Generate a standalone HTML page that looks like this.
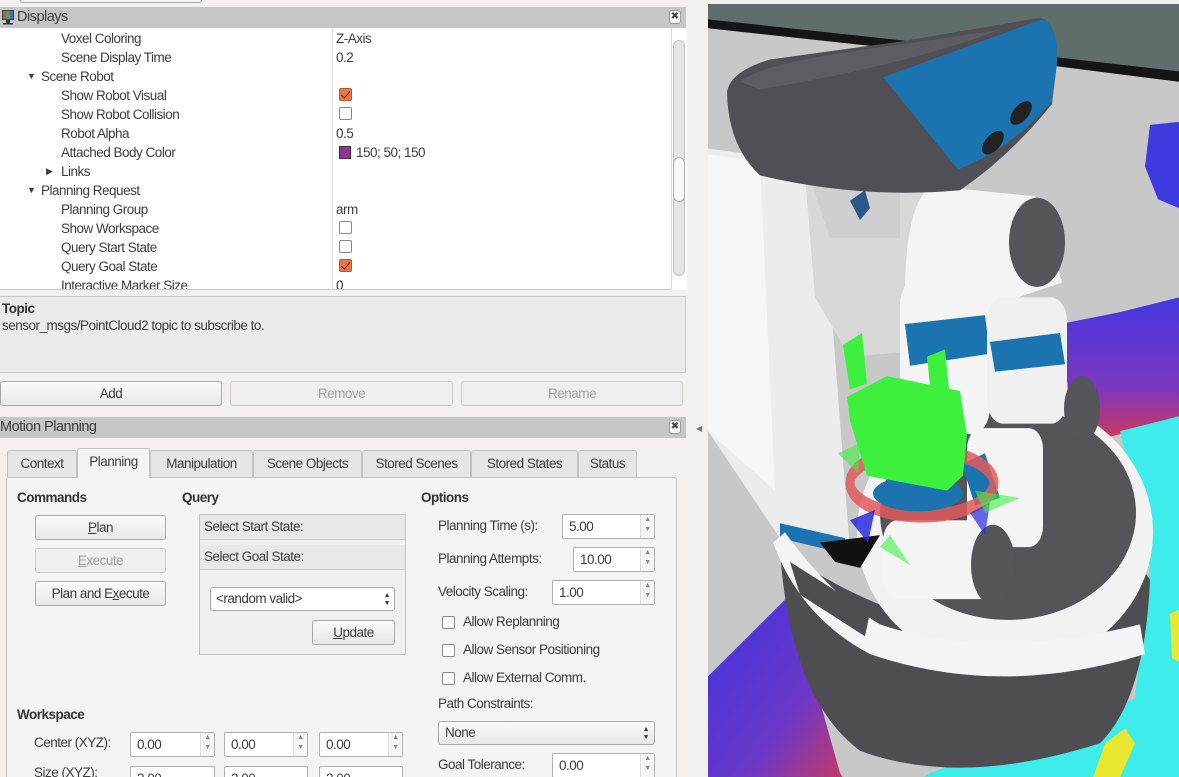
<!DOCTYPE html>
<html><head><meta charset="utf-8"><style>
*{box-sizing:border-box;margin:0;padding:0}
html,body{width:1179px;height:777px;overflow:hidden}
body{background:#f2f1f0;font-family:"Liberation Sans Narrow","Liberation Sans",sans-serif;font-size:13.5px;letter-spacing:-0.5px;color:#3c3c3c;position:relative}
.a{position:absolute;white-space:nowrap}
.hdr{position:absolute;background:#c6c6c6;height:21px}
.close{position:absolute;width:12px;height:14px;border:1px solid #999;border-radius:3px;background:#f4f4f4;font-size:10px;line-height:12px;text-align:center;color:#444;letter-spacing:0}
.row{position:absolute;left:0;height:19px;line-height:19px}
.cb{position:absolute;width:13px;height:13px;border:1px solid #888;border-radius:2px;background:#fff}
.cb.on{background:#e9764a;border-color:#b55a36}
.cb.on:after{content:"";position:absolute;left:3px;top:0px;width:4px;height:8px;border:solid #6a2a10;border-width:0 1.5px 1.5px 0;transform:rotate(40deg)}
.btn{position:absolute;border:1px solid #a8a8a8;border-radius:3px;background:linear-gradient(#fafafa,#e8e8e8);text-align:center;color:#3c3c3c}
.btn.dis{color:#a0a0a0;border-color:#ccc;background:#efefef}
.inp{position:absolute;border:1px solid #b0b0b0;border-radius:2px;background:#fff;padding-left:6px;line-height:23px}
.spin{position:absolute;right:0;top:0;bottom:0;width:14px;border-left:1px solid #ddd;font-size:7px;line-height:10px;text-align:center;color:#888;background:#f6f6f6}
.tab{position:absolute;top:450px;height:27px;line-height:26px;border:1px solid #c2c2c2;border-bottom:none;background:#e6e6e6;text-align:center;border-radius:3px 3px 0 0}
b{font-weight:bold;color:#333}
</style></head><body>
<div class="a" style="left:20px;top:-6px;width:182px;height:9px;border:1px solid #aaa;border-radius:3px;background:#f6f6f6"></div>
<div class="hdr" style="left:0;top:7px;width:686px"></div>
<svg class="a" style="left:1px;top:9px" width="14" height="16"><rect x="1" y="1" width="12" height="10" fill="#444"/><rect x="2" y="2" width="3" height="8" fill="#d44"/><rect x="5" y="2" width="4" height="8" fill="#4a4"/><rect x="9" y="2" width="3" height="8" fill="#46c"/><rect x="5" y="11" width="4" height="3" fill="#333"/><rect x="2" y="14" width="10" height="1.5" fill="#333"/></svg>
<div class="a" style="left:17px;top:8px;line-height:19px;font-size:14.5px">Displays</div>
<div class="close" style="left:669px;top:10px">✖</div>
<div class="a" style="left:0;top:28px;width:671px;height:262px;background:#fff;border-bottom:1px solid #c8c8c8;overflow:hidden">
<div class="a" style="left:332px;top:0;width:1px;height:262px;background:#ddd"></div>
<div class="row" style="top:1px;left:61px">Voxel Coloring</div><div class="row" style="top:1px;left:336px">Z-Axis</div>
<div class="row" style="top:20px;left:61px">Scene Display Time</div><div class="row" style="top:20px;left:336px">0.2</div>
<div class="row" style="top:39px;left:27px;font-size:9px">▼</div><div class="row" style="top:39px;left:41px">Scene Robot</div>
<div class="row" style="top:58px;left:61px">Show Robot Visual</div><div class="cb on" style="left:339px;top:60px"></div>
<div class="row" style="top:77px;left:61px">Show Robot Collision</div><div class="cb" style="left:339px;top:79px"></div>
<div class="row" style="top:96px;left:61px">Robot Alpha</div><div class="row" style="top:96px;left:336px">0.5</div>
<div class="row" style="top:115px;left:61px">Attached Body Color</div><div class="a" style="left:339px;top:118px;width:12px;height:13px;background:#963296;border:1px solid #333"></div><div class="row" style="top:115px;left:356px">150; 50; 150</div>
<div class="row" style="top:134px;left:46px;font-size:9px">▶</div><div class="row" style="top:134px;left:61px">Links</div>
<div class="row" style="top:153px;left:27px;font-size:9px">▼</div><div class="row" style="top:153px;left:41px">Planning Request</div>
<div class="row" style="top:172px;left:61px">Planning Group</div><div class="row" style="top:172px;left:336px">arm</div>
<div class="row" style="top:191px;left:61px">Show Workspace</div><div class="cb" style="left:339px;top:193px"></div>
<div class="row" style="top:210px;left:61px">Query Start State</div><div class="cb" style="left:339px;top:212px"></div>
<div class="row" style="top:229px;left:61px">Query Goal State</div><div class="cb on" style="left:339px;top:231px"></div>
<div class="row" style="top:248px;left:61px">Interactive Marker Size</div><div class="row" style="top:248px;left:336px">0</div>
</div>
<div class="a" style="left:671px;top:28px;width:16px;height:262px;background:#fff;border-left:1px solid #ddd"></div>
<div class="a" style="left:673px;top:40px;width:12px;height:236px;border:1px solid #c0c0c0;border-radius:6px;background:#e4e4e4"></div>
<div class="a" style="left:673px;top:157px;width:12px;height:45px;border:1px solid #b0b0b0;border-radius:6px;background:#f8f8f8"></div>
<div class="a" style="left:0;top:296px;width:686px;height:77px;background:#edebe7;border:1px solid #c8c8c8;border-left:none"></div>
<div class="a" style="left:2px;top:301px;font-weight:bold;color:#333">Topic</div>
<div class="a" style="left:2px;top:318px">sensor_msgs/PointCloud2 topic to subscribe to.</div>
<div class="btn" style="left:0;top:381px;width:222px;height:25px;line-height:23px">Add</div>
<div class="btn dis" style="left:230px;top:381px;width:223px;height:25px;line-height:23px">Remove</div>
<div class="btn dis" style="left:461px;top:381px;width:222px;height:25px;line-height:23px">Rename</div>
<div class="hdr" style="left:0;top:417px;width:686px"></div>
<div class="a" style="left:0;top:418px;line-height:19px;font-size:14.5px">Motion Planning</div>
<div class="close" style="left:669px;top:420px">✖</div>
<div class="a" style="left:696px;top:424px;font-size:8px;color:#777">◀</div>
<div class="a" style="left:6px;top:477px;width:671px;height:310px;border:1px solid #c2c2c2;background:#f4f4f4;border-radius:3px"></div>
<div class="tab" style="left:7px;width:70px">Context</div>
<div class="tab" style="left:77px;width:73px;top:448px;height:30px;background:#f4f4f4">Planning</div>
<div class="tab" style="left:150px;width:103px">Manipulation</div>
<div class="tab" style="left:253px;width:109px">Scene Objects</div>
<div class="tab" style="left:362px;width:109px">Stored Scenes</div>
<div class="tab" style="left:471px;width:107px">Stored States</div>
<div class="tab" style="left:578px;width:59px">Status</div>
<div class="a" style="left:17px;top:490px"><b>Commands</b></div>
<div class="btn" style="left:35px;top:515px;width:131px;height:25px;line-height:23px"><u>P</u>lan</div>
<div class="btn dis" style="left:35px;top:548px;width:131px;height:25px;line-height:23px"><u>E</u>xecute</div>
<div class="btn" style="left:35px;top:581px;width:131px;height:25px;line-height:23px">Plan and E<u>x</u>ecute</div>
<div class="a" style="left:182px;top:490px"><b>Query</b></div>
<div class="a" style="left:199px;top:514px;width:207px;height:141px;border:1px solid #c2c2c2;background:#f0f0f0"></div>
<div class="a" style="left:200px;top:515px;width:205px;height:25px;background:#e8e8e8;border-bottom:1px solid #ccc;padding-left:4px;line-height:24px">Select Start State:</div>
<div class="a" style="left:200px;top:545px;width:205px;height:25px;background:#e8e8e8;border-bottom:1px solid #ccc;padding-left:4px;line-height:24px">Select Goal State:</div>
<div class="btn" style="left:210px;top:587px;width:185px;height:24px;line-height:22px;text-align:left;padding-left:5px;background:#fff">&lt;random valid&gt;<span style="position:absolute;right:4px;top:0;font-size:7px;line-height:8px;padding-top:4px">▲<br>▼</span></div>
<div class="btn" style="left:312px;top:620px;width:83px;height:25px;line-height:23px"><u>U</u>pdate</div>
<div class="a" style="left:421px;top:490px"><b>Options</b></div>
<div class="a" style="left:438px;top:518px">Planning Time (s):</div>
<div class="inp" style="left:562px;top:514px;width:93px;height:25px">5.00<div class="spin">▲<br>▼</div></div>
<div class="a" style="left:438px;top:551px">Planning Attempts:</div>
<div class="inp" style="left:573px;top:547px;width:82px;height:25px">10.00<div class="spin">▲<br>▼</div></div>
<div class="a" style="left:438px;top:584px">Velocity Scaling:</div>
<div class="inp" style="left:552px;top:580px;width:103px;height:25px">1.00<div class="spin">▲<br>▼</div></div>
<div class="cb" style="left:442px;top:616px"></div><div class="a" style="left:463px;top:614px">Allow Replanning</div>
<div class="cb" style="left:442px;top:644px"></div><div class="a" style="left:463px;top:642px">Allow Sensor Positioning</div>
<div class="cb" style="left:442px;top:672px"></div><div class="a" style="left:463px;top:670px">Allow External Comm.</div>
<div class="a" style="left:438px;top:696px">Path Constraints:</div>
<div class="btn" style="left:438px;top:721px;width:217px;height:24px;line-height:22px;text-align:left;padding-left:6px">None<span style="position:absolute;right:5px;top:0;font-size:7px;line-height:8px;padding-top:4px">▲<br>▼</span></div>
<div class="a" style="left:438px;top:757px">Goal Tolerance:</div>
<div class="inp" style="left:552px;top:753px;width:103px;height:25px">0.00<div class="spin">▲<br>▼</div></div>
<div class="a" style="left:17px;top:707px"><b>Workspace</b></div>
<div class="a" style="left:34px;top:735px">Center (XYZ):</div>
<div class="inp" style="left:130px;top:732px;width:85px;height:25px">0.00<div class="spin">▲<br>▼</div></div>
<div class="inp" style="left:224px;top:732px;width:84px;height:25px">0.00<div class="spin">▲<br>▼</div></div>
<div class="inp" style="left:319px;top:732px;width:84px;height:25px">0.00<div class="spin">▲<br>▼</div></div>
<div class="a" style="left:34px;top:765px">Size (XYZ):</div>
<div class="inp" style="left:130px;top:766px;width:85px;height:25px">2.00</div>
<div class="inp" style="left:224px;top:766px;width:84px;height:25px">2.00</div>
<div class="inp" style="left:319px;top:766px;width:84px;height:25px">2.00</div>
<!-- 3D view -->
<svg class="a" style="left:708px;top:4px" width="471" height="773" viewBox="708 4 471 773">
<defs>
<linearGradient id="pg" x1="0" y1="0" x2="0" y2="1"><stop offset="0" stop-color="#4636e0"/><stop offset="0.6" stop-color="#7a38c0"/><stop offset="1" stop-color="#d83a4a"/></linearGradient>
<linearGradient id="bg2" x1="0" y1="0" x2="1" y2="1"><stop offset="0" stop-color="#3f34e0"/><stop offset="0.6" stop-color="#6a38c8"/><stop offset="1" stop-color="#d03a58"/></linearGradient>
</defs>
<rect x="708" y="4" width="471" height="773" fill="#c8c8c8"/>
<g transform="matrix(1 0 0 1.4866 0 0)">
<polygon points="708,2 1179,2 1179,52 1050,40 708,14" fill="#5f6d6b"/>
<polygon points="708,13 1050,38 1179,48 1179,55 1050,44 708,19" fill="#151515"/>
<polygon points="1150,84 1179,82 1179,140 1158,134 1145,112" fill="#3f3ae0"/>
<polygon points="1060,218 1120,210 1179,200 1179,285 1120,292 1075,300" fill="url(#pg)"/>
<polygon points="1120,290 1179,280 1179,530 907,530 930,520 1135,470 1150,380" fill="#3eecec"/>
<polygon points="708,455 790,400 840,520 850,530 708,530" fill="url(#bg2)"/>
<polygon points="1105,500 1125,490 1135,500 1120,523 1093,523" fill="#e8e830"/>
<polygon points="1170,413 1179,410 1179,445 1172,443" fill="#e8e830"/>
<polygon points="708,100 820,110 850,370 780,362 708,290" fill="#ececec"/>
<polygon points="708,104 760,108 775,330 708,290" fill="#f6f6f6"/>
<polygon points="805,118 935,118 935,235 850,240 815,200" fill="#d8d8d8"/>
<polygon points="810,120 900,125 900,160 830,160" fill="#cfcfcf"/>
<polygon points="850,135 865,128 870,140 860,148" fill="#2a5a8a"/>
<polygon points="780,352 845,362 842,372 780,362" fill="#1b74b0"/>
<path d="M780,370 Q790,470 860,505 Q960,530 1100,500 Q1145,470 1150,390 L1140,380 Q1000,470 780,370 Z" fill="#4d4d52"/>
<ellipse cx="1005" cy="358" rx="148" ry="92" fill="#f2f2f2"/>
<ellipse cx="1008" cy="345" rx="128" ry="72" fill="#545459"/>
<path d="M773,365 L785,358 Q830,400 880,420 Q990,445 1140,420 L1145,440 Q1000,470 870,440 Q800,415 773,365 Z" fill="#f4f4f4"/>
<polygon points="790,378 870,412 865,428 800,400" fill="#4d4d52"/>
<polygon points="820,365 880,360 860,382 835,378" fill="#111"/>
<path d="M930,125 L1035,132 L1062,190 L965,212 L905,198 Q905,140 930,125 Z" fill="#f4f4f4"/>
<ellipse cx="1037" cy="163" rx="28" ry="30" fill="#55555a"/>
<rect x="900" y="187" width="90" height="105" rx="18" fill="#f4f4f4"/>
<polygon points="905,218 985,212 990,238 910,246" fill="#1b74b0"/>
<rect x="987" y="200" width="80" height="85" rx="16" fill="#f0f0f0"/>
<polygon points="990,230 1060,224 1065,245 995,250" fill="#1b74b0"/>
<ellipse cx="1082" cy="275" rx="18" ry="22" fill="#55555a"/>
<rect x="967" y="288" width="76" height="80" rx="14" fill="#f4f4f4"/>
<polygon points="962,312 985,305 1000,335 975,340" fill="#1b74b0"/>
<rect x="883" y="350" width="127" height="53" rx="14" fill="#f4f4f4"/>
<ellipse cx="993" cy="380" rx="22" ry="27" fill="#55555a"/>
<ellipse cx="922" cy="325" rx="72" ry="22" fill="none" stroke="#e05a5a" stroke-width="9" opacity="0.85"/>
<ellipse cx="918" cy="332" rx="45" ry="12" fill="#1b74b0"/>
<polygon points="843,232 862,224 867,258 850,262" fill="#3ef03e"/>
<polygon points="927,240 945,235 950,268 932,272" fill="#3ef03e"/>
<polygon points="847,267 887,253 960,263 967,293 963,320 947,330 867,320 850,283" fill="#3ef03e"/>
<polygon points="850,350 875,343 868,365" fill="#2a2ae0" opacity="0.85"/>
<polygon points="970,345 990,338 985,360" fill="#2a2ae0" opacity="0.7"/>
<polygon points="838,305 860,298 858,318" fill="#3ef03e" opacity="0.6"/>
<polygon points="975,330 1020,335 985,345" fill="#3ef03e" opacity="0.6"/>
<polygon points="890,360 910,380 880,368" fill="#3ef03e" opacity="0.6"/>
<path d="M727,62 Q730,48 770,40 L900,28 L1040,12 Q1058,15 1057,42 L1052,70 Q1010,105 960,128 Q860,134 760,118 Q728,98 727,62 Z" fill="#4f4f55"/>
<path d="M740,55 Q760,42 900,30 L1000,20 Q900,45 760,60 Z" fill="#5c5c62"/>
<path d="M883,52 L1042,13 Q1058,16 1057,42 L1052,68 Q1012,100 958,114 Z" fill="#1b74b0"/>
<ellipse cx="993" cy="96" rx="12" ry="6" fill="#222" transform="rotate(-30 993 96)"/>
<ellipse cx="1021" cy="76" rx="12" ry="6" fill="#222" transform="rotate(-30 1021 76)"/>
</g>
</svg>
</body></html>
